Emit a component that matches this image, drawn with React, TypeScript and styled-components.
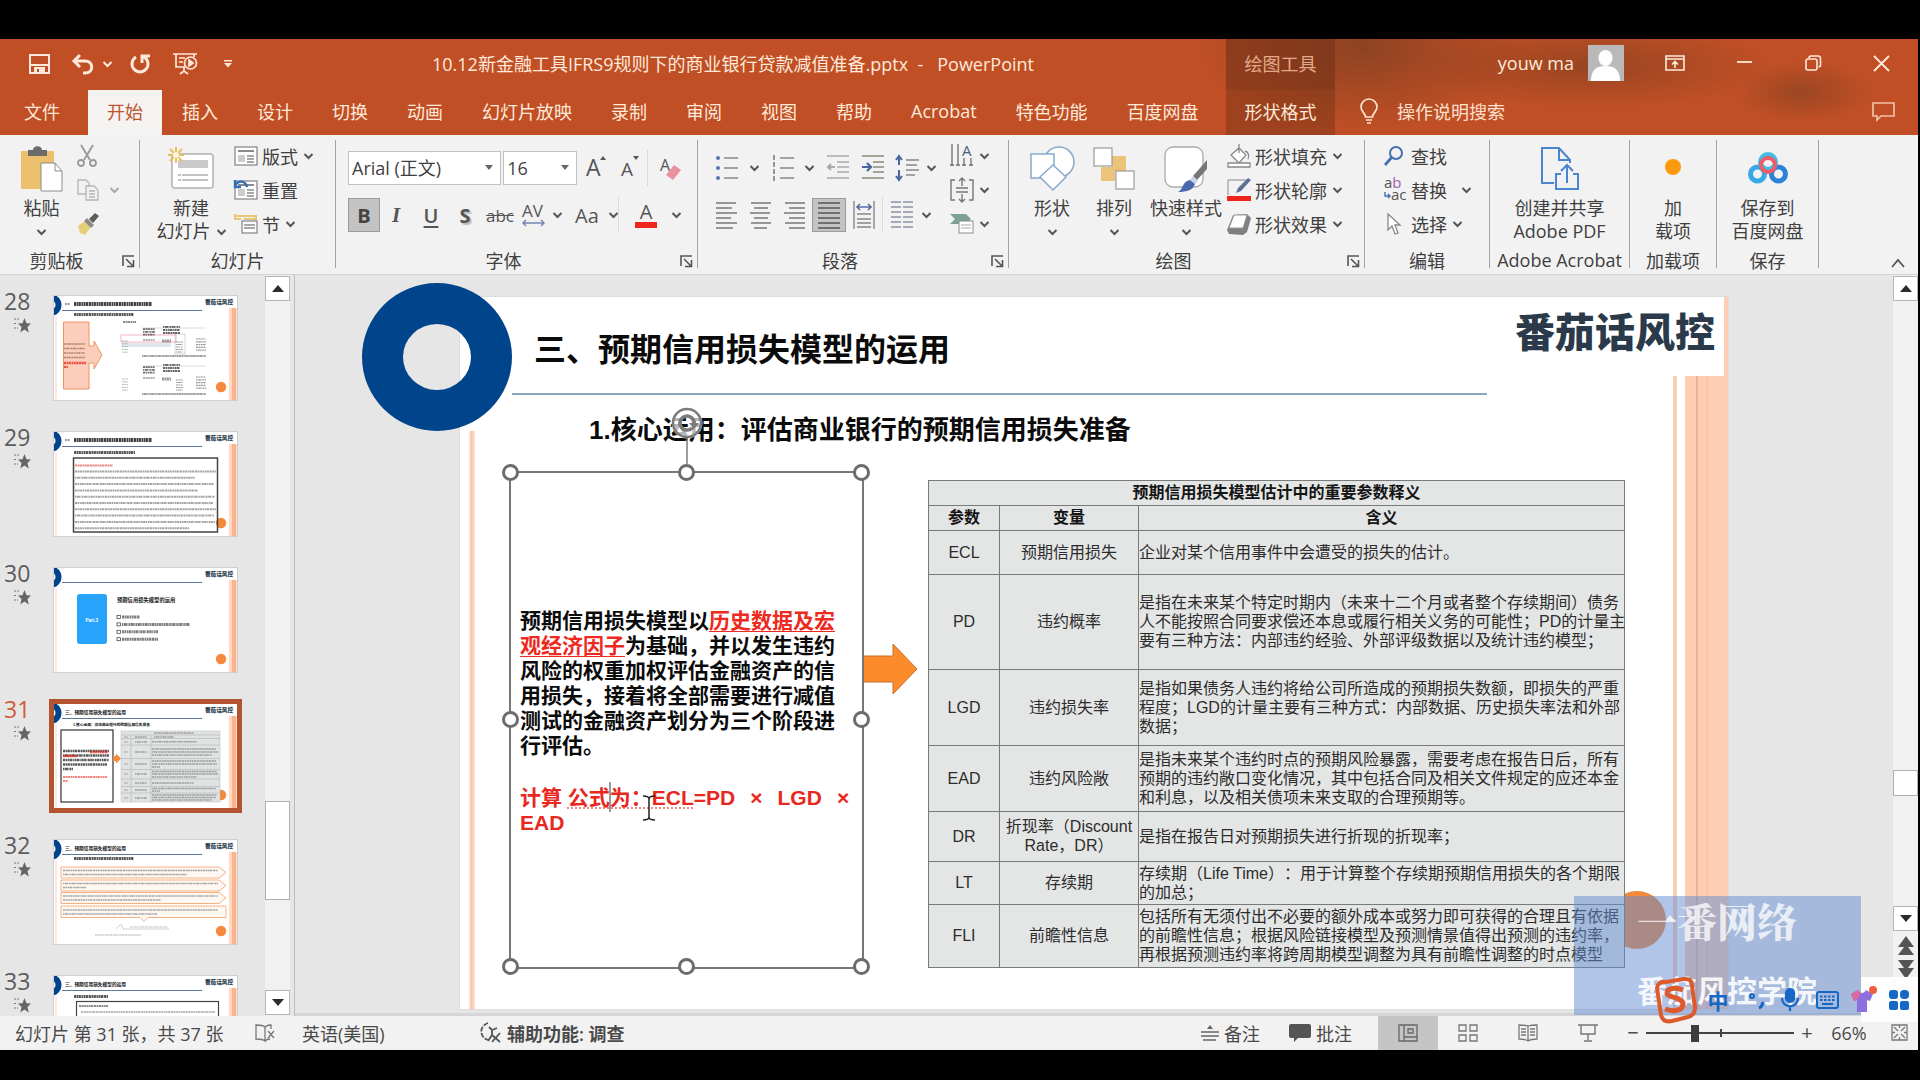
import React from 'react';
import styled, { createGlobalStyle, css } from 'styled-components';

const ui = '"Open Sans", "Noto Sans CJK SC", sans-serif';
const slideFont = '"Liberation Sans", "Noto Sans CJK SC", sans-serif';

const Global = createGlobalStyle`
  *, *::before, *::after { box-sizing: border-box; }
  body { margin: 0; background: #000; font-family: ${ui}; font-size: 18px; color: #444; text-spacing-trim: space-all; }
  button, select, input { font: inherit; color: inherit; margin: 0; }
  button { background: none; border: 0; padding: 0; cursor: pointer; }
  svg { display: block; flex: none; overflow: visible; }
`;

/* ---------- frame ---------- */
const Screen = styled.div`
  height: 100vh;
  padding: 39px 2px 30px 0;
  background: #000;
`;
const Window = styled.div`
  height: 100%;
  display: flex;
  flex-direction: column;
  background: #e6e6e6;
  overflow: hidden;
`;

/* ---------- title bar and tabs ---------- */
const Banner = styled.header`
  height: 96px;
  flex: none;
  display: flex;
  flex-direction: column;
  color: #ffe9da;
  background:
    radial-gradient(ellipse 90px 40px at 94% 55%, rgba(130, 64, 34, 0.6), transparent 75%),
    radial-gradient(ellipse 210px 50px at 83% 28%, rgba(130, 64, 34, 0.65), transparent 85%),
    radial-gradient(ellipse 190px 100px at 71% 8%, rgba(125, 62, 34, 0.75), transparent 85%),
    #c04f25;
`;
const TitleRow = styled.div`
  height: 51px;
  display: flex;
  align-items: center;
`;
const QuickBar = styled.div`
  width: 432px;
  flex: none;
  display: flex;
  align-items: center;
  padding: 0 0 2px 29px;
`;
const QuickButton = styled.button<{ $gap: number }>`
  margin-right: ${(p) => p.$gap}px;
`;
const DocTitle = styled.h1`
  margin: 0;
  padding-bottom: 3px;
  flex: 1;
  font-size: 18px;
  font-weight: 400;
  white-space: pre;
`;
const ContextTitle = styled.div`
  width: 109px;
  flex: none;
  align-self: stretch;
  display: flex;
  align-items: center;
  justify-content: center;
  padding-bottom: 3px;
  color: #e3a98c;
  background: rgba(110, 48, 22, 0.55);
`;
const Account = styled.div`
  width: 583px;
  flex: none;
  display: flex;
  align-items: center;
  justify-content: flex-end;
  padding: 0 26px 3px 0;
`;
const UserName = styled.span`
  margin-right: 14px;
`;
const WinButton = styled.button<{ $near?: boolean }>`
  width: 20px;
  margin-left: ${(p) => (p.$near ? 41 : 49)}px;
`;
const TabRow = styled.nav`
  height: 45px;
  display: flex;
  align-items: stretch;
`;
const Tab = styled.button<{ $active?: boolean; $file?: boolean }>`
  padding: 0 19px 3px;
  margin-right: 1px;
  white-space: nowrap;
  ${(p) => p.$file && css`padding: 0 27px 3px 24px;`}
  ${(p) => p.$active && css`background: #f4f3f2; color: #c0532e;`}
`;
const ContextTab = styled.button`
  width: 109px;
  margin-left: auto;
  padding-bottom: 3px;
  background: rgba(110, 48, 22, 0.42);
`;
const TellMe = styled.label`
  width: 583px;
  display: flex;
  align-items: center;
  padding: 0 23px 2px 25px;
`;
const TellInput = styled.input`
  flex: 1;
  min-width: 0;
  margin-left: 19px;
  border: 0;
  outline: 0;
  padding: 0;
  background: transparent;
  &::placeholder { color: #ffe0cf; opacity: 1; }
`;

/* ---------- ribbon ---------- */
const Ribbon = styled.div`
  height: 140px;
  flex: none;
  display: flex;
  padding: 5px 0 6px;
  background: #f3f2f2;
  border-bottom: 1px solid #d2d2d2;
  color: #3f3f3f;
`;
const Group = styled.section<{ $w: number }>`
  width: ${(p) => p.$w}px;
  flex: none;
  display: flex;
  flex-direction: column;
  border-right: 1px solid #a3a3a3;
  position: relative;
`;
const GroupBody = styled.div<{ $pad?: number }>`
  height: 108px;
  flex: none;
  display: flex;
  padding-left: ${(p) => p.$pad ?? 0}px;
`;
const GroupLabel = styled.div<{ $launch?: boolean }>`
  height: 24px;
  display: flex;
  align-items: center;
  justify-content: center;
  white-space: nowrap;
  padding-right: ${(p) => (p.$launch ? 26 : 0)}px;
`;
const Launcher = styled.button`
  position: absolute;
  right: 4px;
  bottom: 0;
`;
const BigButton = styled.button<{ $w: number }>`
  width: ${(p) => p.$w}px;
  height: 106px;
  flex: none;
  display: flex;
  flex-direction: column;
  align-items: center;
  line-height: 23px;
  white-space: nowrap;
`;
const BigIcon = styled.span`
  height: 57px;
  flex: none;
  display: flex;
  align-items: center;
  justify-content: center;
`;
const BigLine = styled.span`
  height: 23px;
  display: flex;
  align-items: center;
  gap: 6px;
`;
const Stack = styled.div<{ $w: number }>`
  width: ${(p) => p.$w}px;
  display: flex;
  flex-direction: column;
`;
const StackRow = styled.div`
  height: 34px;
  display: flex;
  align-items: center;
  padding-bottom: 3px;
`;
const SmallButton = styled.button<{ $icon: number }>`
  display: flex;
  align-items: center;
  white-space: nowrap;
  & > span {
    width: ${(p) => p.$icon}px;
    display: flex;
  }
  & > span + svg { margin-left: 0; }
`;
const Label = styled.b<{ $gap?: number }>`
  font-weight: 400;
  margin-right: ${(p) => p.$gap ?? 6}px;
`;
const Rows = styled.div<{ $w: number }>`
  width: ${(p) => p.$w}px;
  display: flex;
  flex-direction: column;
  padding-top: 10px;
  gap: 11px;
`;
const ToolRow = styled.div`
  height: 36px;
  display: flex;
  align-items: center;
`;
const Tool = styled.button<{ $w: number; $on?: boolean }>`
  width: ${(p) => p.$w}px;
  height: 34px;
  flex: none;
  display: flex;
  align-items: center;
  justify-content: center;
  font-size: 20px;
  color: #555;
  ${(p) => p.$on && css`background: #c3c3c3; outline: 1px solid #9b9b9b; outline-offset: -1px;`}
`;
const Divider = styled.span`
  width: 1px;
  height: 36px;
  background: #dadada;
`;
const Combo = styled.span<{ $w: number }>`
  width: ${(p) => p.$w}px;
  height: 34px;
  margin-right: 2px;
  position: relative;
  select {
    appearance: none;
    width: 100%;
    height: 100%;
    padding: 0 20px 0 3px;
    border: 1px solid #c2c2c2;
    border-radius: 0;
    background: #fff;
  }
  svg { position: absolute; right: 8px; top: 14px; }
`;
const Bold = styled.b`color: #444;`;
const Ital = styled.i`font: italic 700 21px "Liberation Serif", serif;`;
const Under = styled.span`font-weight: 600; text-decoration: underline; text-underline-offset: 3px;`;
const Shade = styled.b`text-shadow: 2px 2px 1px #bbb;`;
const Strike = styled.s`font-size: 17px;`;
const FontRed = styled.span`
  line-height: 20px;
  padding: 0 5px;
  border-bottom: 6px solid #f0261c;
`;
const Collapse = styled.button`
  margin: 0 13px 0 auto;
  align-self: flex-end;
`;

/* ---------- work area ---------- */
const Work = styled.main`
  flex: 1;
  min-height: 0;
  display: flex;
  position: relative;
`;
const ThumbPane = styled.aside`
  width: 265px;
  flex: none;
  overflow: hidden;
  padding-top: 21px;
`;
const ThumbList = styled.ol`
  list-style: none;
  margin: 0;
  padding: 0;
  display: flex;
  flex-direction: column;
  gap: 32px;
`;
const ThumbItem = styled.li<{ $on?: boolean }>`
  height: 104px;
  display: flex;
  color: ${(p) => (p.$on ? '#cf5b3d' : '#5c5c5c')};
`;
const ThumbNo = styled.div`
  width: 54px;
  flex: none;
  padding: 1px 0 0 4px;
  font-size: 23px;
  line-height: 9px;
  svg { margin: 12px 0 0 10px; }
`;
const ThumbPic = styled.button<{ $on?: boolean }>`
  width: 183px;
  height: 104px;
  background: #fff;
  overflow: hidden;
  outline: ${(p) => (p.$on ? '5px solid #b4532f' : '1px solid #d0d0d0')};
  svg { overflow: hidden; }
`;
const ScrollBar = styled.div`
  width: 25px;
  flex: none;
  display: flex;
  flex-direction: column;
  align-items: center;
  background: #f1f1f1;
  padding: 1px 0;
`;
const ScrollEnd = styled.button`
  width: 25px;
  height: 25px;
  flex: none;
  display: flex;
  align-items: center;
  justify-content: center;
  background: #fff;
  border: 1px solid #b5b5b5;
`;
const ScrollGap = styled.div<{ $grow: number }>`flex: ${(p) => p.$grow} 1 0;`;
const ScrollThumb = styled.div<{ $h: number }>`
  width: 25px;
  height: ${(p) => p.$h}px;
  flex: none;
  background: #fff;
  border: 1px solid #b0b0b0;
`;
const PageButton = styled.button`margin-top: 5px;`;
const Splitter = styled.div`
  width: 5px;
  flex: none;
  border-right: 1px solid #bdbdbd;
`;
const Canvas = styled.div`
  flex: 1;
  min-width: 0;
  display: flex;
  justify-content: center;
  align-items: flex-start;
  padding-top: 22px;
  border-bottom: 3px solid #d6d6d6;
`;

/* ---------- slide: a free canvas, its shapes sit at their own places ---------- */
const Slide = styled.article`
  width: 1268px;
  height: 712px;
  flex: none;
  position: relative;
  background: #fff;
  outline: 1px solid #dcdcdc;
  font-family: ${slideFont};
  color: #0b0b0b;
`;
const Stripe = styled.div<{ $x: number; $y: number; $w: number; $c: string }>`
  position: absolute;
  left: ${(p) => p.$x}px;
  top: ${(p) => p.$y}px;
  bottom: 0;
  width: ${(p) => p.$w}px;
  background: ${(p) => p.$c};
`;
const Ring = styled.div`
  position: absolute;
  left: -98px;
  top: -14px;
  width: 150px;
  height: 148px;
  border: 41px solid #00458b;
  border-radius: 50%;
`;
const SlideTitle = styled.h2`
  position: absolute;
  left: 74px;
  top: 33px;
  margin: 0;
  font-size: 32px;
  line-height: 40px;
  white-space: nowrap;
`;
const TitleRule = styled.div`
  position: absolute;
  left: 52px;
  top: 96px;
  width: 975px;
  height: 2px;
  background: #8ba6c1;
`;
const Brand = styled.div`
  position: absolute;
  left: 1055px;
  top: 14px;
  font-size: 40px;
  font-weight: 900;
  line-height: 44px;
  color: #2b3a4a;
  white-space: nowrap;
`;
const SubTitle = styled.h3`
  position: absolute;
  left: 129px;
  top: 116px;
  margin: 0;
  font-size: 26px;
  line-height: 34px;
  white-space: nowrap;
`;
const TextBox = styled.div`
  position: absolute;
  left: 49px;
  top: 174px;
  width: 355px;
  height: 498px;
  border: 2px solid #777;
  padding: 2px 9px 0;
  display: flex;
  flex-direction: column;
  justify-content: center;
  font-size: 21px;
  font-weight: 700;
  line-height: 25px;
  p { margin: 0; }
`;
const Formula = styled.p`
  padding-top: 27px;
  color: #e8281e;
  white-space: nowrap;
`;
const Key = styled.u`color: #ee2a1f; text-underline-offset: 3px; text-decoration-thickness: 1px;`;
const Proof = styled.u`text-decoration: underline dotted #f08a8a 2px; text-underline-offset: 3px;`;
const Times = styled.span`margin: 0 15px;`;
const Handle = styled.i<{ $x: string; $y: string }>`
  position: absolute;
  left: ${(p) => p.$x};
  top: ${(p) => p.$y};
  width: 17px;
  height: 17px;
  margin: -9px;
  border: 3px solid #6c6c6c;
  border-radius: 50%;
  background: #fff;
`;
const Floating = styled.svg<{ $x: number; $y: number }>`
  position: absolute;
  left: ${(p) => p.$x}px;
  top: ${(p) => p.$y}px;
`;
const Dot = styled.div`
  position: absolute;
  left: 1148px;
  top: 594px;
  width: 58px;
  height: 58px;
  border-radius: 50%;
  background: #f3893b;
`;
const Params = styled.table`
  position: absolute;
  left: 468px;
  top: 183px;
  width: 696px;
  border-collapse: collapse;
  table-layout: fixed;
  background: #e4e6e5;
  font-size: 16px;
  line-height: 19px;
  color: #2c2c2c;
  th, td {
    border: 1px solid #777b7a;
    padding: 0 0 1px;
    text-align: center;
    white-space: nowrap;
  }
  th { color: #151515; }
  td:last-child { text-align: left; }
`;
const ParamRow = styled.tr<{ $h: number }>`height: ${(p) => p.$h}px;`;

/* ---------- overlays ---------- */
const Watermark = styled.div`
  position: absolute;
  right: 57px;
  bottom: 1px;
  width: 287px;
  height: 119px;
  display: flex;
  flex-direction: column;
  justify-content: space-between;
  padding-left: 63px;
  background: rgba(98, 140, 208, 0.5);
  color: rgba(255, 255, 255, 0.75);
  white-space: nowrap;
`;
const MarkTop = styled.span`
  font: 900 40px/48px "Noto Serif CJK SC", "Noto Sans CJK SC", serif;
`;
const MarkBottom = styled.span`
  font: 700 30px/52px "Noto Sans CJK SC", sans-serif;
  color: rgba(255, 255, 255, 0.9);
`;
const ImeBar = styled.div`
  position: absolute;
  right: 0;
  bottom: -6px;
  width: 266px;
  height: 45px;
  display: flex;
  align-items: center;
  color: #1668c4;
  background: linear-gradient(90deg, transparent 209px, #fdfdfd 209px);
`;
const ImeKey = styled.button<{ $w: number }>`
  width: ${(p) => p.$w}px;
  display: flex;
  justify-content: center;
  font: 700 21px/24px "Noto Sans CJK SC", sans-serif;
`;

/* ---------- status bar ---------- */
const Status = styled.footer`
  height: 34px;
  flex: none;
  display: flex;
  align-items: center;
  background: #f3f2f2;
  color: #4a4a4a;
  padding-left: 15px;
  white-space: nowrap;
`;
const StatusItem = styled.button<{ $w: number; $strong?: boolean }>`
  width: ${(p) => p.$w}px;
  flex: none;
  display: flex;
  align-items: center;
  gap: 5px;
  padding-bottom: 1px;
  font-weight: ${(p) => (p.$strong ? 600 : 400)};
`;
const Spacer = styled.div`flex: 1;`;
const ViewButton = styled.button<{ $on?: boolean }>`
  width: 60px;
  height: 34px;
  flex: none;
  display: flex;
  align-items: center;
  justify-content: center;
  background: ${(p) => (p.$on ? '#c5c5c5' : 'transparent')};
`;
const ZoomGroup = styled.div`
  flex: none;
  display: flex;
  align-items: center;
  margin-left: 8px;
`;
const ZoomRange = styled.input`
  appearance: none;
  width: 148px;
  height: 20px;
  margin: 0 6px;
  background:
    linear-gradient(#444, #444) 74px 50% / 2px 8px no-repeat,
    linear-gradient(#444, #444) 0 50% / 100% 2px no-repeat;
  &::-webkit-slider-thumb {
    appearance: none;
    width: 8px;
    height: 17px;
    background: #3d3d3d;
  }
`;
const ZoomStep = styled.button`
  width: 14px;
  font-size: 20px;
  line-height: 20px;
`;
const ZoomValue = styled.button`
  width: 42px;
  margin: 0 21px 0 14px;
`;

/* ---------- drawings ---------- */
const Chev = ({ c = '#555' }: { c?: string }) => (
  <svg width="9" height="6" viewBox="0 0 9 6" fill="none" stroke={c} strokeWidth="2"><path d="M.5 1l4 4 4-4" /></svg>
);
const Tri = ({ up }: { up?: boolean }) => (
  <svg width="12" height="7" viewBox="0 0 12 7" fill="#2b2b2b"><path d={up ? 'M0 7L6 0l6 7z' : 'M0 0h12L6 7z'} /></svg>
);
const LauncherIcon = () => (
  <svg width="13" height="13" viewBox="0 0 13 13" fill="none" stroke="#555" strokeWidth="1.6"><path d="M1 11V1h11M4 4l7 7M11.500 5v6.500H5" /></svg>
);
/* horizontal rules as [x1, x2] pairs, one per row */
const Lines = ({ rows, step = 4, c = '#777', w = 22 }: { rows: number[][]; step?: number; c?: string; w?: number }) => (
  <svg width={w} height={(rows.length - 1) * step + 2} stroke={c} strokeWidth="1.5">
    {rows.map(([a, b], i) => <path key={i} d={`M${a} ${i * step + 1}H${b}`} />)}
  </svg>
);
const StarMark = () => (
  <svg width="17" height="15" viewBox="0 0 17 15" fill="#666">
    <path d="M10.500 0l2 5.200 4.500.2-3.500 3.600 1.200 5.500-4.200-3-4.200 3L7.500 9 4 5.400l4.500-.2z" />
    <path d="M0 1h5M0 5.500h3M0 10h4" stroke="#777" strokeWidth="1.200" strokeDasharray="2 1" />
  </svg>
);

const Scribble = ({ x, y, w, c = '#777', h = 2, seed = 0, o = 0.75 }: { x: number; y: number; w: number; c?: string; h?: number; seed?: number; o?: number }) => (
  <path d={`M${x} ${y}h${w}`} stroke={c} strokeWidth={h} opacity={o} fill="none"
    strokeDasharray={['2 .5 1.500 .4 2.500 .6', '1.500 .5 3 .5 1 .4', '2.500 .5 1 .6 1.800 .4'][seed % 3]} />
);

const ThumbBase = ({ title, sub, subW = 60, children }: { title?: string; sub?: boolean; subW?: number; children?: React.ReactNode }) => (
  <svg width="183" height="104" viewBox="0 0 183 104" fontFamily={slideFont}>
    <rect width="183" height="104" fill="#fff" />
    <path d="M2 20v84" stroke="#fbd3c0" />
    <path d="M179 12v92" stroke="#f9b48c" strokeWidth="7" />
    <path d="M177 12v92" stroke="#ffd9c4" strokeWidth="2" />
    <circle cx="-3.300" cy="9" r="7.800" fill="none" stroke="#00458b" strokeWidth="6" />
    <path d="M8 14.500h140" stroke="#5a789c" />
    <text x="151" y="7.500" fontSize="5.600" fontWeight="900" fill="#2b3a4a">番茄话风控</text>
    {title && <text x="11" y="9.500" fontSize="4.700" fontWeight="700" fill="#111">{title}</text>}
    {sub && <Scribble x={20} y={18.500} w={subW} c="#222" h={2.800} />}
    <circle cx="167" cy="91" r="5.200" fill="#f3893b" />
    {children}
  </svg>
);
const OldHead = () => (
  <g><Scribble x={11} y={8} w={5} c="#555" h={1.500} /><Scribble x={20} y={8} w={78} c="#222" h={4} o={0.85} /></g>
);
const seq = (n: number) => Array.from({ length: n }, (_, i) => i);
const CALC = '三、预期信用损失模型的运用';

const thumbs = [
  { n: 28, pic: (
    <ThumbBase sub><OldHead />
      <path d="M9.500 26H35v24h5v-5l8 14-8 14v-6h-5v26H9.500z" fill="#fccdbb" stroke="#f0935c" />
      {seq(4).map((i) => <Scribble key={i} x={10} y={48 + i * 4.500} w={21} c="#9a6a5a" h={1.300} seed={i} />)}
      <Scribble x={10} y={67} w={22} c="#e8281e" h={2.500} /><Scribble x={10} y={71} w={4} c="#e8281e" />
      <path d="M67 39h55v7H67z" fill="none" stroke="#f3b3bd" /><path d="M67 47h50v4H67z" fill="#e0e6f2" />
      <path d="M121 38h10v20h-10z" fill="none" stroke="#aaa" strokeWidth=".5" />
      <Scribble x={69} y={26} w={13} c="#333" h={1.500} />
      {[33, 71].map((y) => <g key={y}>
        {seq(3).map((i) => <g key={i}><Scribble x={89} y={y + i * 2.800} w={12} c="#444" h={1.800} seed={i} /><Scribble x={109} y={y - 2 + i * 3} w={17} c="#333" h={2.200} seed={i + 1} /></g>)}
        <path d={`M88 ${y - 1}h64M88 ${y + 27}h64`} stroke="#bbb" strokeWidth=".5" />
        {seq(5).map((i) => <g key={i}><Scribble x={68} y={y + 12 + i * 2.800} w={6} c="#9a9" h={1} seed={i} /><Scribble x={122} y={y + 13 + i * 2.500} w={7} h={1} seed={i} /><Scribble x={142} y={y + 10 + i * 2.800} w={10} h={1.200} seed={i} /></g>)}
        <Scribble x={89} y={y + 11} w={12} h={1.500} /><Scribble x={108} y={y + 12} w={9} h={3} />
        <Scribble x={88} y={y + 27} w={64} c="#666" h={1.500} seed={1} />
      </g>)}
    </ThumbBase>) },
  { n: 29, pic: (
    <ThumbBase><OldHead /><Scribble x={20} y={20.500} w={61} c="#222" h={2.800} />
      <rect x="19.500" y="26" width="144" height="74" fill="none" stroke="#444" strokeWidth="1.500" />
      <Scribble x={21} y={33.500} w={38} c="#e5615a" h={2} />
      {seq(10).map((i) => <Scribble key={i} x={21} y={39.500 + i * 6.300} w={[141, 120, 139, 123, 140, 138, 141, 139, 140, 114][i]} c="#888" h={2} seed={i} />)}
    </ThumbBase>) },
  { n: 30, pic: (
    <ThumbBase>
      <rect x="23" y="26" width="30" height="50" rx="3" fill="#27a3fb" />
      <text x="31.500" y="53.500" fontSize="4.500" fontWeight="700" fill="#fff">Part.3</text>
      <text x="63" y="34" fontSize="5.300" fontWeight="700" fill="#111">预期信用损失模型的运用</text>
      {[23, 73, 41, 41].map((w, i) => <g key={i}><rect x="63" y={47.500 + i * 7.400} width="3.500" height="3" fill="none" stroke="#333" strokeWidth=".7" /><Scribble x={68} y={49 + i * 7.400} w={w - 5} c="#555" h={3} seed={i} /></g>)}
    </ThumbBase>) },
  { n: 31, on: true, pic: (
    <ThumbBase title={CALC}>
      <text x="19" y="21.500" fontSize="3.700" fontWeight="700" fill="#111">1.核心运用：评估商业银行的预期信用损失准备</text>
      <rect x="7" y="26" width="52" height="72" fill="none" stroke="#333" strokeWidth="1.200" />
      {seq(5).map((i) => <Scribble key={i} x={9} y={47 + i * 4.500} w={[46, 46, 46, 44, 10][i]} c="#222" h={2.600} seed={i} />)}
      <Scribble x={36} y={48} w={18} c="#e8281e" h={2.500} /><Scribble x={9} y={52} w={14} c="#e8281e" h={2.500} />
      <Scribble x={9} y={73} w={44} c="#e8281e" h={1.500} /><Scribble x={9} y={77} w={5} c="#e8281e" h={1.500} />
      <path d="M59 52h3v-2.500l5 5-5 5V57h-3z" fill="#f3893b" />
      <rect x="67" y="27" width="99" height="71" fill="#e0e3e3" stroke="#bbb" strokeWidth=".5" />
      <path d="M67 31h99M67 34.500h99M67 41h99M67 54.500h99M67 65.500h99M67 75h99M67 82.500h99M67 89h99M77 31v67M97 31v67" stroke="#aaa" strokeWidth=".5" />
      {[29, 33, 37.800, 45, 48, 51, 57, 60, 63, 67.500, 70, 73, 79, 84.500, 87, 91, 93.500, 96].map((y, i) => <Scribble key={i} x={i < 2 ? 100 : 98} y={y} w={[40, 20, 45, 64, 66, 60, 64, 65, 8, 65, 66, 45, 42, 64, 8, 65, 64, 60][i]} c="#888" h={1.600} seed={i} />)}
      {[33, 38, 48, 60, 70, 79, 86, 94].map((y, i) => <g key={i}><Scribble x={70} y={y} w={4} c="#888" h={1.200} /><Scribble x={81} y={y} w={12} c="#888" h={1.500} seed={i} /></g>)}
    </ThumbBase>) },
  { n: 32, pic: (
    <ThumbBase title={CALC} sub subW={60}>
      {[27, 40, 52.500].map((y, k) => <g key={k}>
        <path d={`M7 ${y}h158l7 5.500-7 5.500H7z`} fill="#fff8f2" stroke="#f6b183" />
        <Scribble x={9} y={y + 3.500} w={155} c="#888" h={1.500} seed={k} /><Scribble x={9} y={y + 7.500} w={[124, 23, 98][k]} c="#888" h={1.500} seed={k + 1} />
      </g>)}
      <path d="M7 66h165v11.500H94l-4 4-4-4H7z" fill="#fff8f2" stroke="#f6b183" />
      <Scribble x={9} y={70} w={155} c="#888" h={1.500} /><Scribble x={9} y={74} w={94} c="#888" h={1.500} seed={1} />
      <path d="M62 89l5-5 2 5h46" fill="none" stroke="#bbb" strokeWidth=".7" /><Scribble x={76} y={87} w={38} c="#aaa" h={1.200} /><Scribble x={41} y={95} w={46} c="#999" h={1.200} />
    </ThumbBase>) },
  { n: 33, pic: (
    <ThumbBase title={CALC}><Scribble x={20} y={20.500} w={34} c="#222" h={2.800} />
      <rect x="22.500" y="25.500" width="142" height="90" fill="none" stroke="#444" strokeWidth="1.200" />
      <Scribble x={25} y={30} w={29} c="#333" h={1.600} /><Scribble x={27} y={36} w={134} c="#888" h={1.500} />
    </ThumbBase>) },
];

const params: [number, string, React.ReactNode, React.ReactNode][] = [
  [44, 'ECL', '预期信用损失', '企业对某个信用事件中会遭受的损失的估计。'],
  [95, 'PD', '违约概率', <>是指在未来某个特定时期内（未来十二个月或者整个存续期间）债务<br />人不能按照合同要求偿还本息或履行相关义务的可能性；PD的计量主<br />要有三种方法：内部违约经验、外部评级数据以及统计违约模型；</>],
  [76, 'LGD', '违约损失率', <>是指如果债务人违约将给公司所造成的预期损失数额，即损失的严重<br />程度；LGD的计量主要有三种方式：内部数据、历史损失率法和外部<br />数据；</>],
  [66, 'EAD', '违约风险敞', <>是指未来某个违约时点的预期风险暴露，需要考虑在报告日后，所有<br />预期的违约敞口变化情况，其中包括合同及相关文件规定的应还本金<br />和利息，以及相关债项未来支取的合理预期等。</>],
  [50, 'DR', <>折现率（Discount<br />Rate，DR）</>, '是指在报告日对预期损失进行折现的折现率；'],
  [43, 'LT', '存续期', <>存续期（Life Time）：用于计算整个存续期预期信用损失的各个期限<br />的加总；</>],
  [63, 'FLI', '前瞻性信息', <>包括所有无须付出不必要的额外成本或努力即可获得的合理且有依据<br />的前瞻性信息；根据风险链接模型及预测情景值得出预测的违约率，<br />再根据预测违约率将跨周期模型调整为具有前瞻性调整的时点模型</>],
];

const tabs = ['插入', '设计', '切换', '动画', '幻灯片放映', '录制', '审阅', '视图', '帮助', 'Acrobat', '特色功能', '百度网盘'];

const Header = () => (
  <Banner>
    <TitleRow>
      <QuickBar>
        <QuickButton $gap={22} aria-label="保存"><svg width="21" height="20" viewBox="0 0 21 20" fill="none" stroke="#ffe9da" strokeWidth="2"><path d="M1 1h19v18H1zM2 11h17" /><path d="M6 14h9v5H6z" fill="#ffe9da" /><path d="M9 15v3" stroke="#c04f25" /></svg></QuickButton>
        <QuickButton $gap={9} aria-label="撤消"><svg width="22" height="20" viewBox="0 0 22 20" fill="none" stroke="#ffe9da" strokeWidth="3"><path d="M8 1L2 7l6 6M2 7h11c9 0 9 12 0 12h-2" /></svg></QuickButton>
        <QuickButton $gap={18} aria-label="撤消列表"><Chev c="#ffe9da" /></QuickButton>
        <QuickButton $gap={22} aria-label="重复"><svg width="21" height="20" viewBox="0 0 21 20" fill="none" stroke="#ffe9da" strokeWidth="3"><path d="M6 3a8 8 0 1 0 8 0M12 9V2h8" /></svg></QuickButton>
        <QuickButton $gap={26} aria-label="从头开始"><svg width="25" height="22" viewBox="0 0 25 22" fill="none" stroke="#ffe9da" strokeWidth="1.700"><path d="M0 1h24M3 1v13h9M21 1v3M6 5h6M6 9h4M11 14v5M7 21l4-3 4 3" /><circle cx="17.500" cy="10" r="6" /><path d="M16 7l4 3-4 3z" fill="#ffe9da" /></svg></QuickButton>
        <QuickButton $gap={0} aria-label="自定义"><svg width="8" height="8" viewBox="0 0 8 8" fill="#ffe9da"><path d="M0 0h8v1.500H0zM0 3h8L4 7.500z" /></svg></QuickButton>
      </QuickBar>
      <DocTitle>10.12新金融工具IFRS9规则下的商业银行贷款减值准备.pptx  -   PowerPoint</DocTitle>
      <ContextTitle>绘图工具</ContextTitle>
      <Account>
        <UserName>youw ma</UserName>
        <svg width="36" height="36" viewBox="0 0 36 36"><rect width="36" height="36" fill="#b9b9b9" /><ellipse cx="17.500" cy="13" rx="7" ry="8" fill="#fff" /><path d="M3 36c0-11 5-15 14.500-15S32 25 32 36z" fill="#fff" /></svg>
        <WinButton $near aria-label="功能区显示选项"><svg width="20" height="16" viewBox="0 0 20 16" fill="none" stroke="#ffe9da" strokeWidth="1.600"><path d="M1 1h18v14H1zM1 4h18M10 13V7M7 9.500L10 6.500l3 3" /></svg></WinButton>
        <WinButton aria-label="最小化"><svg width="20" height="16" stroke="#ffe9da" strokeWidth="1.800"><path d="M3 7h15" /></svg></WinButton>
        <WinButton aria-label="还原"><svg width="20" height="16" viewBox="0 0 20 16" fill="none" stroke="#ffe9da" strokeWidth="1.600"><rect x="3" y="4" width="11" height="11" rx="2" /><path d="M6 3c0-1 1-2 2-2h7c1.500 0 2.500 1 2.500 2.500V10c0 1.500-1 2-2 2" /></svg></WinButton>
        <WinButton aria-label="关闭"><svg width="20" height="16" stroke="#ffe9da" strokeWidth="1.800"><path d="M2 1l15 15M17 1L2 16" /></svg></WinButton>
      </Account>
    </TitleRow>
    <TabRow>
      <Tab $file>文件</Tab>
      <Tab $active>开始</Tab>
      {tabs.map((t) => <Tab key={t}>{t}</Tab>)}
      <ContextTab>形状格式</ContextTab>
      <TellMe>
        <svg width="18" height="25" viewBox="0 0 18 25" fill="none" stroke="#ffe0cf" strokeWidth="1.700"><path d="M5.500 18c0-4-4.500-5-4.500-10a8 8 0 0 1 16 0c0 5-4.500 6-4.500 10zM6 21h6M7 24h4" /></svg>
        <TellInput placeholder="操作说明搜索" aria-label="操作说明搜索" />
        <svg width="23" height="19" viewBox="0 0 23 19" fill="none" stroke="#f3c2a8" strokeWidth="1.700"><path d="M1 1h21v13H9l-4 4v-4H1z" /></svg>
      </TellMe>
    </TabRow>
  </Banner>
);

const DocIcon = ({ kind }: { kind: 'layout' | 'reset' | 'section' }) => (
  <svg width="24" height="20" viewBox="0 0 24 20" fill="none" stroke="#8b8b8b" strokeWidth="1.300">
    {kind === 'section'
      ? <><path d="M1 2h21v3H10M1 0v5h6" stroke="#e8c577" strokeWidth="2" /><rect x="8" y="7" width="15" height="12" fill="#fff" /><path d="M10 11h11M10 14h11" /></>
      : <><rect x="1" y="1" width="22" height="18" fill="#fff" /><path d="M4 5h16" strokeWidth="2" /><path d="M4 9h7v7H4z" fill="#ccc" stroke="none" /><path d="M13 10h7M13 13h7M13 16h7" /></>}
    {kind === 'reset' && <path d="M1 6c3-6 10-6 12 1M1 0v7h6" stroke="#2f6eb5" strokeWidth="2.400" />}
  </svg>
);

const RibbonBar = () => (
  <Ribbon>
    <Group $w={140}>
      <GroupBody $pad={6}>
        <BigButton $w={71}>
          <BigIcon><svg width="42" height="46" viewBox="0 0 42 46"><rect x="0" y="5" width="33" height="38" fill="#ecc06c" /><path d="M7 4h5c0-5 9-5 9 0h5v6H7z" fill="#6b6b6b" /><path d="M20 17h14l7 8v20H20z" fill="#fff" stroke="#8c8c8c" /><path d="M34 17v8h7" fill="none" stroke="#8c8c8c" /></svg></BigIcon>
          <BigLine>粘贴</BigLine><BigLine><Chev /></BigLine>
        </BigButton>
        <Stack $w={60}>
          <StackRow><SmallButton $icon={26} aria-label="剪切"><span><svg width="20" height="22" viewBox="0 0 20 22" fill="none" stroke="#999" strokeWidth="1.800"><path d="M4 0l9 15M16 0L7 15" /><circle cx="4" cy="18" r="3" /><circle cx="16" cy="18" r="3" /></svg></span></SmallButton></StackRow>
          <StackRow><SmallButton $icon={33} aria-label="复制"><span><svg width="22" height="22" viewBox="0 0 22 22" fill="#f3f2f2" stroke="#b5b5b5" strokeWidth="1.300"><path d="M1 1h8l3 3v11H1z" /><path d="M9 7h8l4 4v10H9zM12 12h6M12 15h6M12 18h6" /></svg></span><Chev c="#aaa" /></SmallButton></StackRow>
          <StackRow><SmallButton $icon={26} aria-label="格式刷"><span><svg width="22" height="22" viewBox="0 0 22 22"><path d="M1 13l7-5 6 6-6 8-5-2z" fill="#e6cf7a" /><path d="M7 8l3-3 7 7-3 3z" fill="#8a8a8a" /><path d="M12 6l6-6 4 3-6 7z" fill="#5c5c5c" /></svg></span></SmallButton></StackRow>
        </Stack>
      </GroupBody>
      <GroupLabel $launch>剪贴板</GroupLabel>
      <Launcher aria-label="剪贴板选项"><LauncherIcon /></Launcher>
    </Group>

    <Group $w={196}>
      <GroupBody $pad={12}>
        <BigButton $w={78}>
          <BigIcon><svg width="46" height="44" viewBox="0 0 46 44"><rect x="4" y="7" width="41" height="34" rx="2" fill="#fff" stroke="#8c8c8c" /><path d="M10 13h30v8H10z" fill="#c9c9c9" /><path d="M10 28h30M10 33h30" stroke="#b0b0b0" strokeWidth="1.500" strokeDasharray="3 1 30" /><path d="M8 0v16M0 8h16M2 2l12 12M14 2L2 14" stroke="#e8be5a" strokeWidth="2" /><circle cx="8" cy="8" r="3" fill="#fff7dc" /></svg></BigIcon>
          <BigLine>新建</BigLine><BigLine>幻灯片<Chev /></BigLine>
        </BigButton>
        <Rows $w={4} />
        <Stack $w={96}>
          <StackRow><SmallButton $icon={28}><span><DocIcon kind="layout" /></span><Label>版式</Label><Chev /></SmallButton></StackRow>
          <StackRow><SmallButton $icon={28}><span><DocIcon kind="reset" /></span><Label>重置</Label></SmallButton></StackRow>
          <StackRow><SmallButton $icon={28}><span><DocIcon kind="section" /></span><Label>节</Label><Chev /></SmallButton></StackRow>
        </Stack>
      </GroupBody>
      <GroupLabel>幻灯片</GroupLabel>
    </Group>

    <Group $w={362}>
      <GroupBody $pad={12}>
        <Rows $w={346}>
          <ToolRow>
            <Combo $w={154}><select aria-label="字体"><option>Arial (正文)</option></select><svg width="8" height="5" fill="#666"><path d="M0 0h8L4 5z" /></svg></Combo>
            <Combo $w={74}><select aria-label="字号"><option>16</option></select><svg width="8" height="5" fill="#666"><path d="M0 0h8L4 5z" /></svg></Combo>
            <Tool $w={34} aria-label="增大字号"><svg width="20" height="24" viewBox="0 0 20 24" fill="#555"><text x="0" y="20" fontSize="23">A</text><path d="M14 4l3-4 3 4z" /></svg></Tool>
            <Tool $w={34} aria-label="减小字号"><svg width="18" height="24" viewBox="0 0 18 24" fill="#555"><text x="0" y="20" fontSize="19">A</text><path d="M12 0h6l-3 4z" /></svg></Tool>
            <Divider />
            <Tool $w={46} aria-label="清除格式"><svg width="22" height="24" viewBox="0 0 22 24"><text x="0" y="15" fontSize="16" fill="#555">A</text><path d="M14 9l7 5-8 10-7-5z" fill="#e8929c" /></svg></Tool>
          </ToolRow>
          <ToolRow>
            <Tool $w={32} $on><Bold>B</Bold></Tool>
            <Tool $w={32}><Ital>I</Ital></Tool>
            <Tool $w={38}><Under>U</Under></Tool>
            <Tool $w={30}><Shade>S</Shade></Tool>
            <Tool $w={40}><Strike>abc</Strike></Tool>
            <Tool $w={28} aria-label="字符间距"><svg width="24" height="26" viewBox="0 0 24 26"><text x="0" y="15" fontSize="17" fill="#555">AV</text><path d="M1 21h21M4 18l-3 3 3 3M19 18l3 3-3 3" fill="none" stroke="#7686b5" strokeWidth="1.500" /></svg></Tool>
            <Tool $w={18} aria-label="字符间距选项"><Chev /></Tool>
            <Tool $w={42}>Aa</Tool>
            <Tool $w={10} aria-label="大小写选项"><Chev /></Tool>
            <Divider />
            <Tool $w={54}><FontRed>A</FontRed></Tool>
            <Tool $w={6} aria-label="字体颜色选项"><Chev /></Tool>
          </ToolRow>
        </Rows>
      </GroupBody>
      <GroupLabel $launch>字体</GroupLabel>
      <Launcher aria-label="字体选项"><LauncherIcon /></Launcher>
    </Group>

    <Group $w={311}>
      <GroupBody $pad={12}>
        <Rows $w={240}>
          <ToolRow>
            <Tool $w={34} aria-label="项目符号"><svg width="22" height="26" viewBox="0 0 22 26" stroke="#888" strokeWidth="1.500"><path d="M8 3h14M8 13h14M8 23h14" /><g fill="#5b76ac" stroke="none"><circle cx="2" cy="3" r="2" /><circle cx="2" cy="13" r="2" /><circle cx="2" cy="23" r="2" /></g></svg></Tool>
            <Tool $w={20} aria-label="项目符号选项"><Chev /></Tool>
            <Tool $w={38} aria-label="编号"><svg width="22" height="26" viewBox="0 0 22 26" stroke="#888" strokeWidth="1.500"><path d="M8 3h14M8 13h14M8 23h14" /><path d="M2 0v26" stroke="#777" strokeDasharray="5 2" /></svg></Tool>
            <Tool $w={14} aria-label="编号选项"><Chev /></Tool>
            <Tool $w={44} aria-label="减少缩进"><svg width="22" height="26" viewBox="0 0 22 26" fill="none" stroke="#aaa" strokeWidth="1.500"><path d="M0 1h22M10 7h12M10 12h12M10 17h12M0 23h22" /><path d="M8 12H1M4 9l-3 3 3 3" strokeWidth="2" /></svg></Tool>
            <Tool $w={26} aria-label="增加缩进"><svg width="22" height="26" viewBox="0 0 22 26" fill="none" stroke="#8b8b78" strokeWidth="1.500"><path d="M0 1h22M11 7h11M11 12h11M11 17h11M0 23h22" /><path d="M0 12h8M5 8l4 4-4 4" stroke="#4a66a0" strokeWidth="2.200" /></svg></Tool>
            <Tool $w={42} aria-label="行距"><svg width="24" height="26" viewBox="0 0 24 26" fill="none" stroke="#888" strokeWidth="1.500"><path d="M11 5h13M11 10h11M11 15h13M11 20h9" /><path d="M4 1v9M1 5l3-4 3 4M4 15v9M1 21l3 4 3-4" stroke="#4a66a0" strokeWidth="2" /></svg></Tool>
            <Tool $w={6} aria-label="行距选项"><Chev /></Tool>
          </ToolRow>
          <ToolRow>
            <Tool $w={34} aria-label="左对齐"><Lines rows={[[0, 20], [0, 16], [0, 21], [0, 15], [0, 21], [0, 17]]} step={5} /></Tool>
            <Tool $w={34} aria-label="居中"><Lines rows={[[1, 21], [4, 18], [0, 20], [4, 18], [1, 21], [4, 17]]} step={5} /></Tool>
            <Tool $w={34} aria-label="右对齐"><Lines rows={[[1, 21], [5, 21], [0, 21], [5, 21], [1, 21], [5, 21]]} step={5} /></Tool>
            <Tool $w={34} $on aria-label="两端对齐"><Lines c="#555" rows={[[0, 22], [0, 22], [0, 22], [0, 22], [0, 22], [0, 22]]} step={5} /></Tool>
            <Tool $w={36} aria-label="分散对齐"><svg width="22" height="28" viewBox="0 0 22 28" fill="none" stroke="#888" strokeWidth="1.400"><path d="M1 0v28M21 0v28M4 13h14M4 18h14M4 22h14M4 26h14" /><path d="M4 6h14M7 3L4 6l3 3M15 3l3 3-3 3" stroke="#56709f" strokeWidth="1.700" /></svg></Tool>
            <Divider />
            <Tool $w={38} aria-label="分栏"><svg width="22" height="28" stroke="#8b93a5" strokeWidth="1.500"><path d="M0 1h10M12 1h10M0 6h10M12 6h10M0 11h10M12 11h10M0 16h10M12 16h10M0 21h10M12 21h10M0 26h10M12 26h10" /></svg></Tool>
            <Tool $w={10} aria-label="分栏选项"><Chev /></Tool>
          </ToolRow>
        </Rows>
        <Stack $w={50}>
          <StackRow><SmallButton $icon={30} aria-label="文字方向"><span><svg width="24" height="24" viewBox="0 0 24 24" stroke="#777" strokeWidth="1.400"><path d="M2 0v22M8 0v22M14 14v8M21 14v8M0 21h4M6 21h4M12 21h4M19 21h4" /><text x="12" y="12" fontSize="15" fill="#4b5c80" stroke="none">A</text></svg></span><Chev /></SmallButton></StackRow>
          <StackRow><SmallButton $icon={30} aria-label="对齐文本"><span><svg width="24" height="24" viewBox="0 0 24 24" fill="none" stroke="#777" strokeWidth="1.400"><path d="M5 2H1v20h4M19 2h4v20h-4M6 10h12M6 14h12M12 0v8M9 3l3-3 3 3M12 16v8M9 21l3 3 3-3" /></svg></span><Chev /></SmallButton></StackRow>
          <StackRow><SmallButton $icon={30} aria-label="转换为 SmartArt"><span><svg width="24" height="20" viewBox="0 0 24 20"><path d="M0 0h16l5 5-5 5H0l5-5z" fill="#7ba191" /><rect x="9" y="7" width="14" height="12" fill="#fff" stroke="#8c8c8c" /><path d="M11 11h10M11 14h10" stroke="#aaa" /></svg></span><Chev /></SmallButton></StackRow>
        </Stack>
      </GroupBody>
      <GroupLabel $launch>段落</GroupLabel>
      <Launcher aria-label="段落选项"><LauncherIcon /></Launcher>
    </Group>

    <Group $w={356}>
      <GroupBody $pad={12}>
        <BigButton $w={62}>
          <BigIcon><svg width="45" height="45" viewBox="0 0 45 45" fill="#fff" stroke="#89a9cb" strokeWidth="1.500"><circle cx="29" cy="16" r="15" /><path d="M1 8h23v24H1z" /><path d="M23 19l13 12-13 13-13-13z" /></svg></BigIcon>
          <BigLine>形状</BigLine><BigLine><Chev /></BigLine>
        </BigButton>
        <BigButton $w={62}>
          <BigIcon><svg width="42" height="44" viewBox="0 0 42 44"><path d="M19 9h14v15H22v10H8V20h11z" fill="#ebc47a" /><g fill="#fff" stroke="#999" strokeWidth="1.200"><rect x="1" y="1" width="18" height="18" /><rect x="23" y="24" width="18" height="18" /></g></svg></BigIcon>
          <BigLine>排列</BigLine><BigLine><Chev /></BigLine>
        </BigButton>
        <BigButton $w={82}>
          <BigIcon><svg width="46" height="46" viewBox="0 0 46 46"><rect x="2" y="1" width="38" height="40" rx="8" fill="#fff" stroke="#aaa" strokeWidth="1.300" /><path d="M44 14v9L34 34l-4-4z" fill="#777" /><path d="M30 30l5 5-3 3-5-4z" fill="#c9d3e6" /><path d="M27 34l5 4c-2 6-8 8-17 8 6-3 4-11 12-12z" fill="#4a69ad" /></svg></BigIcon>
          <BigLine>快速样式</BigLine><BigLine><Chev /></BigLine>
        </BigButton>
        <Stack $w={120}>
          <StackRow><SmallButton $icon={28}><span><svg width="24" height="24" viewBox="0 0 24 24" fill="#fff" stroke="#888" strokeWidth="1.300"><path d="M4 11l8-7 7 7-7 8zM12 9V0M18 7c4 1 4 5 3 8" /><path d="M1 19h22v4H1z" /></svg></span><Label>形状填充</Label><Chev /></SmallButton></StackRow>
          <StackRow><SmallButton $icon={28}><span><svg width="24" height="24" viewBox="0 0 24 24"><path d="M1 17V2h18" fill="none" stroke="#888" /><path d="M9 15l2-5L21 0l3 2-10 11z" fill="#5c7295" /><path d="M0 18h24v5H0z" fill="#f0231c" /></svg></span><Label>形状轮廓</Label><Chev /></SmallButton></StackRow>
          <StackRow><SmallButton $icon={28}><span><svg width="24" height="22" viewBox="0 0 24 22"><path d="M6 2l14-1 4 4-4 14-4 3-14-1-2-4z" fill="#7f7f7f" /><path d="M7 2h13l-4 13H2z" fill="#fff" stroke="#999" /></svg></span><Label>形状效果</Label><Chev /></SmallButton></StackRow>
        </Stack>
      </GroupBody>
      <GroupLabel $launch>绘图</GroupLabel>
      <Launcher aria-label="绘图选项"><LauncherIcon /></Launcher>
    </Group>

    <Group $w={125}>
      <GroupBody $pad={19}>
        <Stack $w={100}>
          <StackRow><SmallButton $icon={27}><span><svg width="20" height="20" viewBox="0 0 20 20" fill="none" stroke="#4472b0" strokeWidth="2"><circle cx="12" cy="7" r="6" /><path d="M8 11l-7 8" strokeWidth="2.800" /></svg></span><Label>查找</Label></SmallButton></StackRow>
          <StackRow><SmallButton $icon={27}><span><svg width="23" height="24" viewBox="0 0 23 24" fontSize="15"><text x="0" y="10" fill="#555">a<tspan fill="#9c62b4">b</tspan></text><text x="7" y="22" fill="#555">ac</text><path d="M1 14v4h5M4 16l2 2-2 2" fill="none" stroke="#4472b0" strokeWidth="1.400" /></svg></span><Label $gap={15}>替换</Label><Chev /></SmallButton></StackRow>
          <StackRow><SmallButton $icon={27}><span><svg width="20" height="22" viewBox="0 0 20 22" fill="#fff" stroke="#888" strokeWidth="1.300"><path d="M4 1v16l4-4 3 8 3-1-3-8h5z" /></svg></span><Label>选择</Label><Chev /></SmallButton></StackRow>
        </Stack>
      </GroupBody>
      <GroupLabel>编辑</GroupLabel>
    </Group>

    <Group $w={140}>
      <GroupBody>
        <BigButton $w={139}>
          <BigIcon><svg width="38" height="44" viewBox="0 0 38 44" fill="none" stroke="#4a86cf" strokeWidth="2"><path d="M13 36H1V1h17l11 12v3M18 1v12h11" /><path d="M20 27h-5v15h22V27h-5M26 36V19M20 24l6-6 6 6" /></svg></BigIcon>
          <BigLine>创建并共享</BigLine><BigLine>Adobe PDF</BigLine>
        </BigButton>
      </GroupBody>
      <GroupLabel>Adobe Acrobat</GroupLabel>
    </Group>
    <Group $w={87}>
      <GroupBody>
        <BigButton $w={86}>
          <BigIcon><svg width="20" height="20"><circle cx="10" cy="8" r="8" fill="#fb990f" /></svg></BigIcon>
          <BigLine>加</BigLine><BigLine>载项</BigLine>
        </BigButton>
      </GroupBody>
      <GroupLabel>加载项</GroupLabel>
    </Group>
    <Group $w={102}>
      <GroupBody>
        <BigButton $w={101}>
          <BigIcon><svg width="40" height="34" viewBox="0 0 40 34" fill="none" strokeWidth="5"><circle cx="9.500" cy="22" r="7" stroke="#37a9e8" /><circle cx="30.500" cy="22" r="7" stroke="#2a83d8" /><circle cx="20" cy="10" r="7.500" stroke="#3fbce0" /><circle cx="20" cy="13" r="7" stroke="#ef5a68" strokeWidth="4" /></svg></BigIcon>
          <BigLine>保存到</BigLine><BigLine>百度网盘</BigLine>
        </BigButton>
      </GroupBody>
      <GroupLabel>保存</GroupLabel>
    </Group>
    <Collapse aria-label="折叠功能区"><svg width="14" height="9" fill="none" stroke="#555" strokeWidth="1.800"><path d="M1 8l6-7 6 7" /></svg></Collapse>
  </Ribbon>
);

const SlideView = () => (
  <Slide>
    <Stripe $x={8} $y={134} $w={7} $c="linear-gradient(90deg,#fff,#fcc3ab 50%,#fde3d7)" />
    <Stripe $x={1213} $y={79} $w={4} $c="#fccdb6" />
    <Stripe $x={1225} $y={79} $w={43} $c="linear-gradient(90deg,#fecdb3 11px,#eeb392 11px,#eeb392 13px,#fecdb3 13px,#fecdb3 21px,#f7c29f 21px,#fecdb3 24px)" />
    <Stripe $x={1264} $y={0} $w={4} $c="#fecdb3" />
    <Ring />
    <SlideTitle>三、预期信用损失模型的运用</SlideTitle>
    <TitleRule />
    <Brand>番茄话风控</Brand>
    <SubTitle>1.核心运用：评估商业银行的预期信用损失准备</SubTitle>
    <Dot />
    <Params>
      <colgroup><col width="71" /><col width="139" /><col width="486" /></colgroup>
      <thead>
        <ParamRow $h={25}><th colSpan={3}>预期信用损失模型估计中的重要参数释义</th></ParamRow>
        <ParamRow $h={25}><th>参数</th><th>变量</th><th>含义</th></ParamRow>
      </thead>
      <tbody>
        {params.map(([h, k, v, d]) => <ParamRow key={k} $h={h}><td>{k}</td><td>{v}</td><td>{d}</td></ParamRow>)}
      </tbody>
    </Params>
    <Floating $x={402} $y={346} width="56" height="52" viewBox="0 0 56 52" fill="#fb8b2b" stroke="#c9722c"><path d="M1 13h30V1l24 25-24 25V39H1z" /></Floating>
    <TextBox>
      <p>预期信用损失模型以<Key>历史数据及宏观经济因子</Key>为基础，并以发生违约风险的权重加权评估金融资产的信用损失，接着将全部需要进行减值测试的金融资产划分为三个阶段进行评估。</p>
      <Formula>计算 <Proof>公式为：ECL</Proof>=PD<Times>×</Times>LGD<Times>×</Times><br />EAD</Formula>
      {['0%', '50%', '100%'].map((x) => ['0%', '50%', '100%'].map((y) => (x === '50%' && y === '50%' ? null : <Handle key={x + y} $x={x} $y={y} />)))}
    </TextBox>
    <Floating $x={211} $y={110} width="32" height="58" viewBox="0 0 32 58" fill="none" stroke="#7b7b7b">
      <path d="M16 32v26" strokeWidth="1.500" />
      <circle cx="16" cy="16" r="12" stroke="#fff" strokeWidth="7" opacity=".7" />
      <circle cx="16" cy="16" r="14" strokeWidth="2.500" />
      <path d="M21 21a7 7 0 1 1 2-5" strokeWidth="3.500" /><path d="M18 16h10l-5 6z" fill="#7b7b7b" stroke="none" />
    </Floating>
    <Floating $x={149} $y={485} width="2" height="30" stroke="#333"><path d="M1 0v30" /></Floating>
    <Floating $x={182} $y={498} width="14" height="26" fill="none" stroke="#222" strokeWidth="1.500"><path d="M1 1c4 0 6 1 6 3 0-2 2-3 6-3M7 4v18M1 25c4 0 6-1 6-3 0 2 2 3 6 3" /></Floating>
  </Slide>
);

const PageTri = ({ down }: { down?: boolean }) => (
  <svg width="16" height="19" viewBox="0 0 16 19" fill="#555"><path d={down ? 'M0 0h16l-6 8h6l-8 11L0 8h6z' : 'M8 0l8 11h-6l6 8H0l6-8H0z'} /></svg>
);

export default function App() {
  return (
    <Screen>
      <Global />
      <Window>
        <Header />
        <RibbonBar />
        <Work>
          <ThumbPane>
            <ThumbList>
              {thumbs.map((t) => (
                <ThumbItem key={t.n} $on={t.on}>
                  <ThumbNo>{t.n}<StarMark /></ThumbNo>
                  <ThumbPic $on={t.on} aria-label={`幻灯片 ${t.n}`}>{t.pic}</ThumbPic>
                </ThumbItem>
              ))}
            </ThumbList>
          </ThumbPane>
          <ScrollBar>
            <ScrollEnd aria-label="向上"><Tri up /></ScrollEnd>
            <ScrollGap $grow={500} /><ScrollThumb $h={99} /><ScrollGap $grow={90} />
            <ScrollEnd aria-label="向下"><Tri /></ScrollEnd>
          </ScrollBar>
          <Splitter />
          <Canvas><SlideView /></Canvas>
          <ScrollBar>
            <ScrollEnd aria-label="向上滚动"><Tri up /></ScrollEnd>
            <ScrollGap $grow={469} /><ScrollThumb $h={26} /><ScrollGap $grow={110} />
            <ScrollEnd aria-label="向下滚动"><Tri /></ScrollEnd>
            <PageButton aria-label="上一张"><PageTri /></PageButton>
            <PageButton aria-label="下一张"><PageTri down /></PageButton>
            <ScrollGap $grow={36} />
          </ScrollBar>
          <Watermark><MarkTop>一番网络</MarkTop><MarkBottom>番茄风控学院</MarkBottom></Watermark>
          <ImeBar>
            <ImeKey $w={44} aria-label="搜狗输入法"><svg width="44" height="44" viewBox="0 0 44 44" fill="none"><path d="M5 10Q6 3 14 4l18-3q8-1 8 7l3 22q0 7-7 9l-16 4q-9 2-11-6z" stroke="#dd5a2c" strokeWidth="4" /><path d="M31 12c-7-3-16-2-16 3s16 4 16 11-10 8-18 5" stroke="#dd5a2c" strokeWidth="5" /></svg></ImeKey>
            <ImeKey $w={44}>中</ImeKey>
            <ImeKey $w={34} aria-label="标点"><svg width="16" height="18" viewBox="0 0 16 18" fill="none" stroke="#1668c4" strokeWidth="2"><circle cx="3" cy="5" r="2" /><path d="M13 11c1 2 0 5-3 6" strokeWidth="3" /></svg></ImeKey>
            <ImeKey $w={32} aria-label="语音"><svg width="18" height="24" viewBox="0 0 18 24" fill="none" stroke="#1668c4" strokeWidth="2.200"><rect x="5" y="1" width="8" height="13" rx="4" fill="#1668c4" /><path d="M1 10c0 11 16 11 16 0M9 18v5" /></svg></ImeKey>
            <ImeKey $w={42} aria-label="键盘"><svg width="23" height="18" viewBox="0 0 23 18" fill="none" stroke="#1668c4" strokeWidth="2"><rect x="1" y="1" width="21" height="16" rx="2" /><path d="M4 5.500h15M4 9h15" strokeDasharray="2.500 1.500" /><path d="M6 13h11" /></svg></ImeKey>
            <ImeKey $w={32} aria-label="皮肤"><svg width="26" height="26" viewBox="0 0 26 26"><path d="M0 7l7-4c2 4 6 4 8 0l7 4-3 7-3-1v12H6V13l-3 1z" fill="#8d6fe0" /><path d="M0 7l7-4 3 3-4 7-3 1z" fill="#d96a9f" /><circle cx="22" cy="3" r="4" fill="#f0603c" /></svg></ImeKey>
            <ImeKey $w={38} aria-label="工具箱"><svg width="20" height="20" fill="#1668c4"><rect width="9" height="9" rx="3" /><rect x="11" width="9" height="9" rx="4" /><rect y="11" width="9" height="9" rx="2" /><rect x="11" y="11" width="9" height="9" rx="2" /></svg></ImeKey>
          </ImeBar>
        </Work>
        <Status>
          <StatusItem $w={240}>幻灯片 第 31 张，共 37 张</StatusItem>
          <StatusItem $w={47} aria-label="拼写检查"><svg width="21" height="18" viewBox="0 0 21 18" fill="none" stroke="#777" strokeWidth="1.300"><path d="M10 3C8 1 4 1 1 1v14c3 0 7 0 9 2zM10 3c2-2 4-2 6-2v4M10 17c1-1 3-2 5-2M13 7l6 7M19 7l-6 7" /></svg></StatusItem>
          <StatusItem $w={178}>英语(美国)</StatusItem>
          <StatusItem $w={180} $strong><svg width="22" height="21" viewBox="0 0 22 21" fill="none" stroke="#555" strokeWidth="1.800"><path d="M8 1C-1 4-1 15 8 18" strokeDasharray="5 1.500" /><path d="M9 5l3 3 5-2M12 8l0 5-4 6M12 13l8 7M20 11l-8 9" /></svg>辅助功能: 调查</StatusItem>
          <Spacer />
          <StatusItem $w={88}><svg width="18" height="18" viewBox="0 0 18 18" stroke="#666" strokeWidth="1.400" fill="#666"><path d="M0 8h18M0 12h18M2 16h13" /><path d="M9 1l3 4H6z" stroke="none" /></svg>备注</StatusItem>
          <StatusItem $w={89}><svg width="22" height="18" viewBox="0 0 22 18" fill="#555"><path d="M2 0h18q2 0 2 2v10q0 2-2 2H9l-4 4v-4H2q-2 0-2-2V2q0-2 2-2z" /></svg>批注</StatusItem>
          <ViewButton $on aria-label="普通视图"><svg width="20" height="18" viewBox="0 0 20 18" fill="none" stroke="#666" strokeWidth="1.300"><path d="M1 1h18v16H1zM6 1v16M6 13h13M10 5h5v4h-5z" /></svg></ViewButton>
          <ViewButton aria-label="幻灯片浏览"><svg width="20" height="18" viewBox="0 0 20 18" fill="none" stroke="#777" strokeWidth="1.300"><path d="M1 1h7v6H1zM12 1h7v6h-7zM1 11h7v6H1zM12 11h7v6h-7z" /></svg></ViewButton>
          <ViewButton aria-label="阅读视图"><svg width="20" height="18" viewBox="0 0 20 18" fill="none" stroke="#777" strokeWidth="1.300"><path d="M10 2C7 1 4 1 1 1v14c3 0 6 0 9 2 3-2 6-2 9-2V1c-3 0-6 0-9 1zv15M3 5h5M3 8h5M3 11h5M12 5h5M12 8h5M12 11h5" /></svg></ViewButton>
          <ViewButton aria-label="幻灯片放映"><svg width="20" height="18" viewBox="0 0 20 18" fill="none" stroke="#777" strokeWidth="1.400"><path d="M0 1h20M3 1v9h14V1M10 10v6M6 17h8" /></svg></ViewButton>
          <ZoomGroup>
            <ZoomStep aria-label="缩小">−</ZoomStep>
            <ZoomRange type="range" min={10} max={300} defaultValue={104} aria-label="缩放" />
            <ZoomStep aria-label="放大">+</ZoomStep>
            <ZoomValue>66%</ZoomValue>
          </ZoomGroup>
          <StatusItem $w={27} aria-label="适应窗口"><svg width="17" height="17" viewBox="0 0 17 17" fill="none" stroke="#777" strokeWidth="1.300"><path d="M1 1h15v15H1zM3 3l4 4M14 3l-4 4M3 14l4-4M14 14l-4-4M8.500 1v3M8.500 13v3M1 8.500h3M13 8.500h3" /></svg></StatusItem>
        </Status>
      </Window>
    </Screen>
  );
}
